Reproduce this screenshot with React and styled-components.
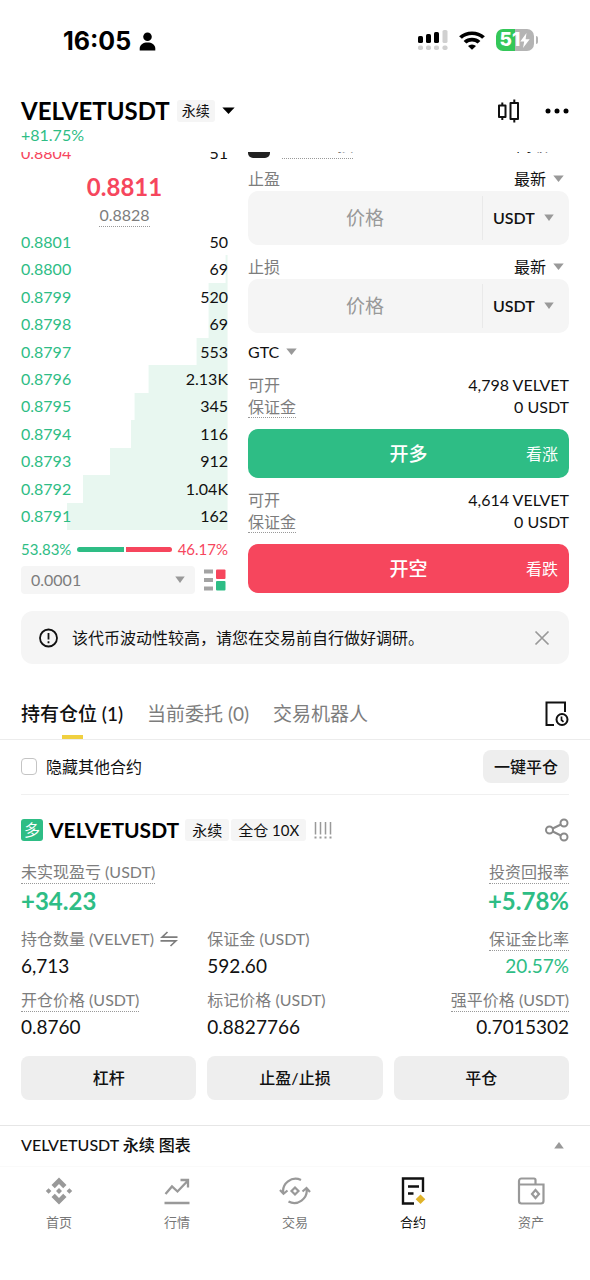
import React from "react";
import styled, { createGlobalStyle } from "styled-components";

const GREEN = "#2ebd85";
const RED = "#f6465d";
const INK = "#111";
const GREY = "#7d7d7d";

const GlobalStyle = createGlobalStyle`
    * {
        box-sizing: border-box;
    }
    body {
        margin: 0;
        background: #fff;
        color: ${INK};
        font-family: Lato, "Noto Sans CJK SC", sans-serif;
        font-size: 16px;
        line-height: 22px;
    }
    button, input, select {
        margin: 0;
        padding: 0;
        border: 0;
        background: none;
        color: inherit;
        font: inherit;
        appearance: none;
    }
    button, select {
        cursor: pointer;
    }
    svg {
        display: block;
        flex-shrink: 0;
    }
`;

const StatusBar = styled.div`
    display: flex;
    justify-content: space-between;
    align-items: center;
    height: 80px;
    padding: 0 52px 0 63px;
    font-family: Inter, sans-serif;
`;

const Clock = styled.div`
    display: flex;
    align-items: center;
    gap: 8px;
    padding-top: 2px;
    font-size: 25px;
    font-weight: 700;
    color: #000;
`;

const StatusIcons = styled.div`
    display: flex;
    align-items: center;
    gap: 11px;
`;

const Battery = styled.div`
    display: flex;
    align-items: center;
    gap: 2px;
    &::after {
        content: "";
        width: 2px;
        height: 8px;
        border-radius: 0 2px 2px 0;
        background: #b4b4b4;
    }
`;

const BatteryBody = styled.div`
    display: flex;
    align-items: center;
    justify-content: center;
    width: 38px;
    height: 22px;
    border-radius: 7px;
    background: linear-gradient(to right, #34c759 51%, #b4b4b4 51%);
    color: #fff;
    font-size: 19px;
    font-weight: 800;
`;

const Header = styled.header`
    display: flex;
    justify-content: space-between;
    align-items: flex-start;
    height: 72px;
    padding: 18px 21px 0;
`;

const PairButton = styled.button`
    display: flex;
    align-items: center;
    gap: 7px;
    height: 26px;
`;

const PairName = styled.span`
    font-size: ${props => props.$size}px;
    font-weight: 700;
    color: #000;
`;

const Tag = styled.span`
    padding: 0 ${props => (props.$small ? 5 : 7)}px;
    border-radius: 3px;
    background: #f5f5f5;
    font-size: ${props => (props.$small ? 14 : 15)}px;
    white-space: nowrap;
`;

const Change = styled.div`
    color: ${GREEN};
`;

const HeaderActions = styled.div`
    display: flex;
    align-items: center;
    gap: 25px;
    height: 26px;
`;

const TradeArea = styled.section`
    display: grid;
    grid-template-columns: 207fr 321fr;
    gap: 20px;
    overflow: hidden;
    padding: 0 21px;
`;

const BookSide = styled.div`
    display: flex;
    flex-direction: column;
    margin-top: -12px;
`;

const AskRow = styled.div`
    display: flex;
    justify-content: space-between;
    height: 30px;
    line-height: 25px;
    span:first-child {
        color: ${RED};
    }
`;

const LastPrice = styled.div`
    height: 34px;
    line-height: 34px;
    text-align: center;
    font-size: 24px;
    font-weight: 700;
    color: ${RED};
`;

const Dotted = styled.span`
    display: inline-block;
    border-bottom: 1px dotted #999;
    color: ${GREY};
    white-space: nowrap;
`;

const MarkPrice = styled.div`
    display: flex;
    justify-content: center;
    margin-bottom: 1px;
`;

const BookTable = styled.table`
    width: 100%;
    height: 302px;
    border-collapse: collapse;
    td {
        padding: 0;
        color: ${GREEN};
    }
    td:last-child {
        text-align: right;
        color: ${INK};
    }
`;

const Ratio = styled.div`
    display: flex;
    align-items: center;
    gap: 6px;
    height: 30px;
    margin: 4px 0 2px;
    font-size: 15px;
`;

const RatioValue = styled.span`
    color: ${props => props.$color};
`;

const RatioBar = styled.div`
    display: flex;
    gap: 2px;
    flex: 1;
    height: 5px;
    border-radius: 3px;
    overflow: hidden;
`;

const RatioPart = styled.div`
    flex: 1;
    background: ${props => props.$color};
`;

const StepRow = styled.div`
    display: grid;
    grid-template-columns: 1fr 24px;
    gap: 9px;
    align-items: center;
    height: 28px;
`;

const SelectBox = styled.label`
    display: grid;
    align-items: center;
    justify-items: end;
    color: ${props => props.$color || INK};
    select {
        grid-area: 1 / 1;
        width: 100%;
        height: ${props => props.$height || 22}px;
        padding: ${props => props.$padding || "0 17px 0 0"};
        border-radius: 4px;
        background: ${props => props.$fill || "none"};
        font-weight: ${props => props.$weight || 400};
    }
    svg {
        grid-area: 1 / 1;
        margin-right: ${props => props.$inset || 0}px;
        pointer-events: none;
    }
`;

const FormSide = styled.div`
    display: flex;
    flex-direction: column;
    margin-top: -16px;
`;

const FormRow = styled.div`
    display: flex;
    justify-content: space-between;
    height: 22px;
    margin-top: ${props => props.$top || 0}px;
    padding-right: ${props => props.$right || 0}px;
`;

const ModeRow = styled.div`
    display: flex;
    justify-content: space-between;
    height: 23px;
    padding-right: 21px;
    line-height: 18px;
`;

const Muted = styled.span`
    color: ${GREY};
`;

const StopToggle = styled.label`
    display: flex;
    gap: 12px;
    input {
        width: 22px;
        height: 22px;
        border-radius: 5px;
        background: #222;
    }
`;

const PriceField = styled.div`
    display: flex;
    align-items: center;
    height: 54px;
    margin-top: 1px;
    border-radius: 10px;
    background: #f5f5f5;
    input {
        flex: 1;
        min-width: 0;
        height: 44px;
        padding-bottom: 2px;
        border-right: 1px solid #e9e9e9;
        text-align: center;
        font-size: 19px;
    }
    input::placeholder {
        color: #999;
        opacity: 1;
    }
`;

const OrderButton = styled.button`
    display: grid;
    grid-template-columns: 1fr auto 1fr;
    align-items: center;
    height: 49px;
    margin-top: 11px;
    padding: 0 11px;
    border-radius: 10px;
    background: ${props => props.$color};
    color: #fff;
    font-size: 19px;
    font-weight: 500;
    span:first-child {
        grid-column: 2;
    }
    span:last-child {
        justify-self: end;
        font-size: 16px;
        font-weight: 400;
    }
`;

const Notice = styled.div`
    display: flex;
    align-items: center;
    height: 53px;
    margin: 17px 21px 0;
    padding: 0 19px 0 18px;
    border-radius: 12px;
    background: #f5f5f5;
    p {
        flex: 1;
        margin: 0 0 0 14px;
    }
`;

const Tabs = styled.nav`
    display: flex;
    align-items: center;
    gap: 24px;
    height: 52px;
    margin-top: 24px;
    padding: 0 21px;
    border-bottom: 1px solid #ececec;
`;

const Tab = styled.button`
    display: flex;
    flex-direction: column;
    align-items: center;
    justify-content: space-between;
    height: 51px;
    padding-top: 15px;
    font-size: 19px;
    font-weight: ${props => (props.$active ? 500 : 400)};
    color: ${props => (props.$active ? INK : GREY)};
    white-space: nowrap;
    &::after {
        content: "";
        width: 21px;
        height: 4px;
        background: ${props => (props.$active ? "#f0d040" : "transparent")};
    }
`;

const HistoryButton = styled.button`
    margin-left: auto;
`;

const FilterRow = styled.div`
    display: flex;
    justify-content: space-between;
    align-items: center;
    height: 55px;
    margin: 0 21px;
    padding-bottom: 1px;
    border-bottom: 1px solid #f0f0f0;
`;

const HideOthers = styled.label`
    display: flex;
    align-items: center;
    gap: 9px;
    input {
        width: 16px;
        height: 17px;
        border: 1px solid #c4c4c4;
        border-radius: 4px;
    }
`;

const GreyButton = styled.button`
    height: ${props => props.$height}px;
    padding: 0 11px;
    border-radius: 8px;
    background: #eee;
    font-weight: 500;
`;

const Position = styled.section`
    padding: 23px 21px 25px;
`;

const PositionHead = styled.div`
    display: flex;
    align-items: center;
    height: 24px;
`;

const SideBadge = styled.span`
    width: 22px;
    margin-right: 6px;
    border-radius: 3px;
    background: ${GREEN};
    color: #fff;
    text-align: center;
`;

const Tags = styled.div`
    display: flex;
    align-items: center;
    gap: 2px;
    margin: 0 8px 0 6px;
`;

const ShareButton = styled.button`
    margin-left: auto;
`;

const Stats = styled.dl`
    display: grid;
    grid-template-columns: repeat(3, 1fr);
    column-gap: 11px;
    margin: 19px 0 6px;
`;

const Stat = styled.div`
    height: ${props => (props.$big ? 67 : 61)}px;
    text-align: ${props => (props.$right ? "right" : "left")};
    white-space: nowrap;
    dt {
        display: flex;
        justify-content: ${props => (props.$right ? "flex-end" : "flex-start")};
        gap: 6px;
        align-items: flex-start;
        height: 24px;
        color: ${GREY};
    }
    dt svg {
        margin-top: 3px;
    }
    dd {
        margin: 0;
        line-height: ${props => (props.$big ? 32 : 28)}px;
        font-size: ${props => (props.$big ? 24 : 19)}px;
        font-weight: ${props => (props.$big ? 700 : 400)};
        color: ${props => (props.$green ? GREEN : INK)};
    }
`;

const PositionActions = styled.div`
    display: grid;
    grid-template-columns: repeat(3, 1fr);
    gap: 11px;
`;

const ChartBar = styled.button`
    display: flex;
    justify-content: space-between;
    align-items: center;
    width: 100%;
    height: 41px;
    padding: 0 26px 2px 21px;
    border-top: 1px solid #e6e6e6;
    font-weight: 500;
`;

const BottomNav = styled.nav`
    display: grid;
    grid-template-columns: repeat(5, 1fr);
    padding: 9px 0 46px;
    border-top: 1px solid #fafafa;
`;

const NavLink = styled.a`
    display: flex;
    flex-direction: column;
    align-items: center;
    gap: 5px;
    color: ${props => (props.$active ? "#111" : "#777")};
    font-size: 13px;
    text-decoration: none;
    svg {
        color: ${props => (props.$active ? "#111" : "#999")};
    }
`;

const Caret = ({ size = 11, color = "#999", up }) => (
    <svg width={size} height="8" viewBox="0 0 11 8" preserveAspectRatio="none" fill={color}>
        <path d={up ? "M5.5 1 10.8 7.5H.2z" : "M.3.5h10.4L5.5 7z"} />
    </svg>
);

const PersonIcon = () => (
    <svg width="17" height="19" viewBox="0 0 17 20">
        <circle cx="8.5" cy="5" r="4.5" />
        <path d="M.3 19.5v-2.6C.8 13 4 11 8.5 11s7.7 2 8.2 5.9v2.6z" />
    </svg>
);

const SignalIcon = () => (
    <svg width="30" height="22" viewBox="0 0 30 22">
        <rect x="0" y="7" width="5" height="7" rx="1.6" />
        <rect x="8" y="5" width="5" height="9" rx="1.6" />
        <rect x="16" y="3" width="5" height="11" rx="1.6" />
        <g fill="#d0d0d0">
            <rect x="24.5" y="1" width="5" height="13" rx="1.6" />
            {[0, 8, 16, 24.5].map(x => (
                <rect key={x} x={x} y="16.5" width="5" height="4.5" rx="1.8" />
            ))}
        </g>
    </svg>
);

const WifiIcon = () => (
    <svg width="26" height="20" viewBox="0 0 26 22" preserveAspectRatio="none" fill="none" stroke="#000" strokeWidth="4">
        <path d="M1.5 8.2a16.5 16.5 0 0 1 23 0" />
        <path d="M6 13.5a10 10 0 0 1 14 0" />
        <path d="M13 21.7 9 17.6a5.4 5.4 0 0 1 8 0z" fill="#000" stroke="none" />
    </svg>
);

const BoltIcon = () => (
    <svg width="10" height="15" viewBox="0 0 10 15" fill="#fff">
        <path d="M6.5 0 .3 8.5h3.9L3 15l6.700-8.800H5.600z" />
    </svg>
);

const CandlesIcon = () => (
    <svg width="22" height="24" viewBox="0 0 22 24" fill="none" stroke="#111" strokeWidth="2" strokeLinejoin="round">
        <path d="M1 6.500h6.500v11.500H1zM4.300 3.500v3M4.300 18v3M12.500 4h7.500v16h-7.500zM16.300 0.500V4M16.300 20v3.500" />
    </svg>
);

const DotsIcon = () => (
    <svg width="24" height="6" viewBox="0 0 24 6" fill="#000">
        <circle cx="3" cy="3" r="2.500" />
        <circle cx="12" cy="3" r="2.500" />
        <circle cx="21" cy="3" r="2.500" />
    </svg>
);

const BookModeIcon = () => (
    <svg width="22" height="22" viewBox="0 0 22 22">
        <path fill="#a3a3a3" d="M0 .5h9v4H0zM0 9h9v4H0zM0 17.5h9v4H0z" />
        <rect x="12" y="0.5" width="9.5" height="9.5" rx="1" fill={RED} />
        <rect x="12" y="12" width="9.5" height="9.5" rx="1" fill={GREEN} />
    </svg>
);

const WarnIcon = () => (
    <svg width="19" height="20" viewBox="0 0 19 20" fill="none" stroke="#111" strokeWidth="1.8">
        <circle cx="9.5" cy="10" r="8.5" />
        <path d="M9.5 5v6.5M9.5 13.2v2" />
    </svg>
);

const CloseIcon = () => (
    <svg width="16" height="16" viewBox="0 0 16 16" fill="none" stroke="#999" strokeWidth="1.7">
        <path d="m1.5 1.5 13 13M14.5 1.5l-13 13" />
    </svg>
);

const HistoryIcon = () => (
    <svg width="24" height="26" viewBox="0 0 24 26" fill="none" stroke="#111" strokeWidth="2">
        <path d="M9 24H1.500V1.500H20V11" />
        <circle cx="17" cy="18.500" r="5.500" />
        <path d="M16.500 15.500v3.500l2 1.800" strokeWidth="1.700" />
    </svg>
);

const LevelIcon = () => (
    <svg width="18" height="17" viewBox="0 0 18 17" fill="none" stroke="#999" strokeWidth="1.5">
        <path d="M1.500 0v12.500M6.500 0v12.500M11.500 0v12.500M16.500 0v12.500" />
        <path d="M1.500 14.500v2M6.500 14.500v2M11.500 14.500v2M16.500 14.500v2" strokeWidth="2" />
    </svg>
);

const ShareIcon = () => (
    <svg width="24" height="24" viewBox="0 0 24 24" fill="none" stroke="#8a8a8a" strokeWidth="2">
        <circle cx="4.5" cy="12" r="3.5" />
        <circle cx="19" cy="5" r="3.5" />
        <circle cx="19" cy="19" r="3.5" />
        <path d="m7.7 10.5 8.2-4M7.7 13.5l8.2 4" />
    </svg>
);

const SwapIcon = () => (
    <svg width="18" height="16" viewBox="0 0 18 16" fill="none" stroke="#7d7d7d" strokeWidth="1.7">
        <path d="M7.5 1 2 6.2h15.5M.5 9.8H16L10.5 15" />
    </svg>
);

const HomeIcon = () => (
    <svg width="28" height="30" viewBox="0 0 28 30" fill="currentColor">
        <path d="m14 1.5 7.500 7.500-3.300 3.300L14 8.100l-4.200 4.200L6.500 9zM14 28.500l7.500-7.500-3.300-3.300-4.200 4.200-4.200-4.200L6.500 21z" />
        <path d="m14 12 3 3-3 3-3-3zM3.600 12.200 6.400 15l-2.800 2.800L.8 15zM24.400 12.200l2.800 2.800-2.800 2.800-2.800-2.800z" />
    </svg>
);

const MarketIcon = () => (
    <svg width="28" height="30" viewBox="0 0 28 30" fill="none" stroke="currentColor" strokeWidth="2.3">
        <path d="m2.500 18 6.500-7.500 5.500 5L25 4.500M17.500 4H25v7.500M1.500 27h25" />
    </svg>
);

const TradeIcon = () => (
    <svg width="32" height="30" viewBox="0 0 32 30" fill="none" stroke="currentColor" strokeWidth="2.2">
        <path d="M22 4A12.500 12.500 0 0 0 4.300 17.500M1 14l3.500 3.800L8.500 14.500M9.500 25.500A12.500 12.500 0 0 0 27.600 12.500M23.500 15.500l4-3.500 3.500 4" />
        <path d="m16 11.500 3.500 3.500-3.500 3.500-3.500-3.500z" />
    </svg>
);

const FuturesIcon = () => (
    <svg width="26" height="30" viewBox="0 0 26 30" fill="none" stroke="currentColor" strokeWidth="2.4">
        <path d="M14 27.500H3V2.500h20V16M8 10.500h11M8 17.500h5.500" />
        <path d="m20.500 18.500 4.800 4.800-4.800 4.800-4.800-4.800z" fill="#e0b32a" stroke="none" />
    </svg>
);

const AssetsIcon = () => (
    <svg width="28" height="30" viewBox="0 0 28 30" fill="none" stroke="currentColor" strokeWidth="2.2">
        <path d="M2 8.500V5a2.500 2.500 0 0 1 2.500-2.500H17A1.500 1.500 0 0 1 18.500 4v4.500M2 8.500h24.500V25a2.500 2.500 0 0 1-2.500 2.500H4.500A2.500 2.500 0 0 1 2 25z" />
        <path d="m18.500 14 3.500 4-3.500 4-3.500-4z" />
    </svg>
);

// depth is the cumulative size, in percent of the column
const bids = [
    { price: "0.8801", size: "50", depth: 0 },
    { price: "0.8800", size: "69", depth: 1 },
    { price: "0.8799", size: "520", depth: 9 },
    { price: "0.8798", size: "69", depth: 9 },
    { price: "0.8797", size: "553", depth: 15 },
    { price: "0.8796", size: "2.13K", depth: 38 },
    { price: "0.8795", size: "345", depth: 45 },
    { price: "0.8794", size: "116", depth: 47 },
    { price: "0.8793", size: "912", depth: 57 },
    { price: "0.8792", size: "1.04K", depth: 70 },
    { price: "0.8791", size: "162", depth: 78 },
];

const stats = [
    { label: "未实现盈亏 (USDT)", value: "+34.23", dotted: true, big: true, green: true },
    { big: true },
    { label: "投资回报率", value: "+5.78%", dotted: true, big: true, green: true, right: true },
    { label: "持仓数量 (VELVET)", value: "6,713", icon: <SwapIcon /> },
    { label: "保证金 (USDT)", value: "592.60" },
    { label: "保证金比率", value: "20.57%", dotted: true, green: true, right: true },
    { label: "开仓价格 (USDT)", value: "0.8760", dotted: true },
    { label: "标记价格 (USDT)", value: "0.8827766" },
    { label: "强平价格 (USDT)", value: "0.7015302", dotted: true, right: true },
];

const navItems = [
    { label: "首页", Icon: HomeIcon },
    { label: "行情", Icon: MarketIcon },
    { label: "交易", Icon: TradeIcon },
    { label: "合约", Icon: FuturesIcon, active: true },
    { label: "资产", Icon: AssetsIcon },
];

const OrderBook = () => (
    <BookSide>
        <AskRow>
            <span>0.8804</span>
            <span>51</span>
        </AskRow>
        <LastPrice>0.8811</LastPrice>
        <MarkPrice>
            <Dotted>0.8828</Dotted>
        </MarkPrice>
        <BookTable>
            <tbody>
                {bids.map(({ price, size, depth }) => (
                    <tr
                        key={price}
                        style={{ background: `linear-gradient(to left, #e8f7f0 ${depth}%, transparent ${depth}%)` }}
                    >
                        <td>{price}</td>
                        <td>{size}</td>
                    </tr>
                ))}
            </tbody>
        </BookTable>
        <Ratio>
            <RatioValue $color={GREEN}>53.83%</RatioValue>
            <RatioBar>
                <RatioPart $color={GREEN} />
                <RatioPart $color={RED} />
            </RatioBar>
            <RatioValue $color={RED}>46.17%</RatioValue>
        </Ratio>
        <StepRow>
            <SelectBox $height={28} $padding="0 10px" $fill="#f5f5f5" $color={GREY} $inset={10}>
                <select aria-label="价格精度">
                    <option>0.0001</option>
                </select>
                <Caret size={10} />
            </SelectBox>
            <button aria-label="盘口显示">
                <BookModeIcon />
            </button>
        </StepRow>
    </BookSide>
);

const StopPrice = ({ id, label, top }) => (
    <>
        <FormRow $top={top} $right={5}>
            <label htmlFor={id}>
                <Muted>{label}</Muted>
            </label>
            <SelectBox>
                <select aria-label={`${label}触发价`}>
                    <option>最新</option>
                </select>
                <Caret />
            </SelectBox>
        </FormRow>
        <PriceField>
            <input id={id} type="text" placeholder="价格" />
            <SelectBox $height={42} $padding="0 34px 0 10px" $weight={600} $inset={15}>
                <select aria-label={`${label}单位`}>
                    <option>USDT</option>
                </select>
                <Caret size={10} />
            </SelectBox>
        </PriceField>
    </>
);

const OpenOrder = ({ max, label, hint, color }) => (
    <>
        <FormRow $top={11}>
            <Muted>可开</Muted>
            <span>{max}</span>
        </FormRow>
        <FormRow>
            <Dotted>保证金</Dotted>
            <span>0 USDT</span>
        </FormRow>
        <OrderButton $color={color}>
            <span>{label}</span>
            <span>{hint}</span>
        </OrderButton>
    </>
);

const OrderForm = () => (
    <FormSide>
        <ModeRow>
            <StopToggle>
                <input type="checkbox" defaultChecked />
                <Dotted>止盈/止损</Dotted>
            </StopToggle>
            <span>高级</span>
        </ModeRow>
        <StopPrice id="take-profit" label="止盈" top={9} />
        <StopPrice id="stop-loss" label="止损" top={11} />
        <FormRow $top={8}>
            <SelectBox>
                <select aria-label="有效方式">
                    <option>GTC</option>
                </select>
                <Caret />
            </SelectBox>
        </FormRow>
        <OpenOrder max="4,798 VELVET" label="开多" hint="看涨" color={GREEN} />
        <OpenOrder max="4,614 VELVET" label="开空" hint="看跌" color={RED} />
    </FormSide>
);

const App = () => (
    <>
        <GlobalStyle />
        <StatusBar>
            <Clock>
                16:05
                <PersonIcon />
            </Clock>
            <StatusIcons>
                <SignalIcon />
                <WifiIcon />
                <Battery>
                    <BatteryBody>
                        51
                        <BoltIcon />
                    </BatteryBody>
                </Battery>
            </StatusIcons>
        </StatusBar>
        <Header>
            <div>
                <PairButton>
                    <PairName $size={24}>VELVETUSDT</PairName>
                    <Tag $small>永续</Tag>
                    <Caret size={13} color="#000" />
                </PairButton>
                <Change>+81.75%</Change>
            </div>
            <HeaderActions>
                <button aria-label="K线">
                    <CandlesIcon />
                </button>
                <button aria-label="更多">
                    <DotsIcon />
                </button>
            </HeaderActions>
        </Header>
        <TradeArea>
            <OrderBook />
            <OrderForm />
        </TradeArea>
        <Notice>
            <WarnIcon />
            <p>该代币波动性较高，请您在交易前自行做好调研。</p>
            <button aria-label="关闭">
                <CloseIcon />
            </button>
        </Notice>
        <Tabs>
            <Tab $active>持有仓位 (1)</Tab>
            <Tab>当前委托 (0)</Tab>
            <Tab>交易机器人</Tab>
            <HistoryButton aria-label="历史记录">
                <HistoryIcon />
            </HistoryButton>
        </Tabs>
        <FilterRow>
            <HideOthers>
                <input type="checkbox" />
                隐藏其他合约
            </HideOthers>
            <GreyButton $height={33}>一键平仓</GreyButton>
        </FilterRow>
        <Position>
            <PositionHead>
                <SideBadge>多</SideBadge>
                <PairName $size={21}>VELVETUSDT</PairName>
                <Tags>
                    <Tag>永续</Tag>
                    <Tag>全仓 10X</Tag>
                </Tags>
                <LevelIcon />
                <ShareButton aria-label="分享">
                    <ShareIcon />
                </ShareButton>
            </PositionHead>
            <Stats>
                {stats.map(({ label, value, dotted, icon, big, green, right }, i) => (
                    <Stat key={i} $big={big} $green={green} $right={right}>
                        {label && (
                            <dt>
                                {dotted ? <Dotted>{label}</Dotted> : label}
                                {icon}
                            </dt>
                        )}
                        {value && <dd>{value}</dd>}
                    </Stat>
                ))}
            </Stats>
            <PositionActions>
                <GreyButton $height={44}>杠杆</GreyButton>
                <GreyButton $height={44}>止盈/止损</GreyButton>
                <GreyButton $height={44}>平仓</GreyButton>
            </PositionActions>
        </Position>
        <ChartBar>
            VELVETUSDT 永续 图表
            <Caret size={10} up />
        </ChartBar>
        <BottomNav>
            {navItems.map(({ label, Icon, active }) => (
                <NavLink key={label} href="#" $active={active}>
                    <Icon />
                    {label}
                </NavLink>
            ))}
        </BottomNav>
    </>
);

export default App;
